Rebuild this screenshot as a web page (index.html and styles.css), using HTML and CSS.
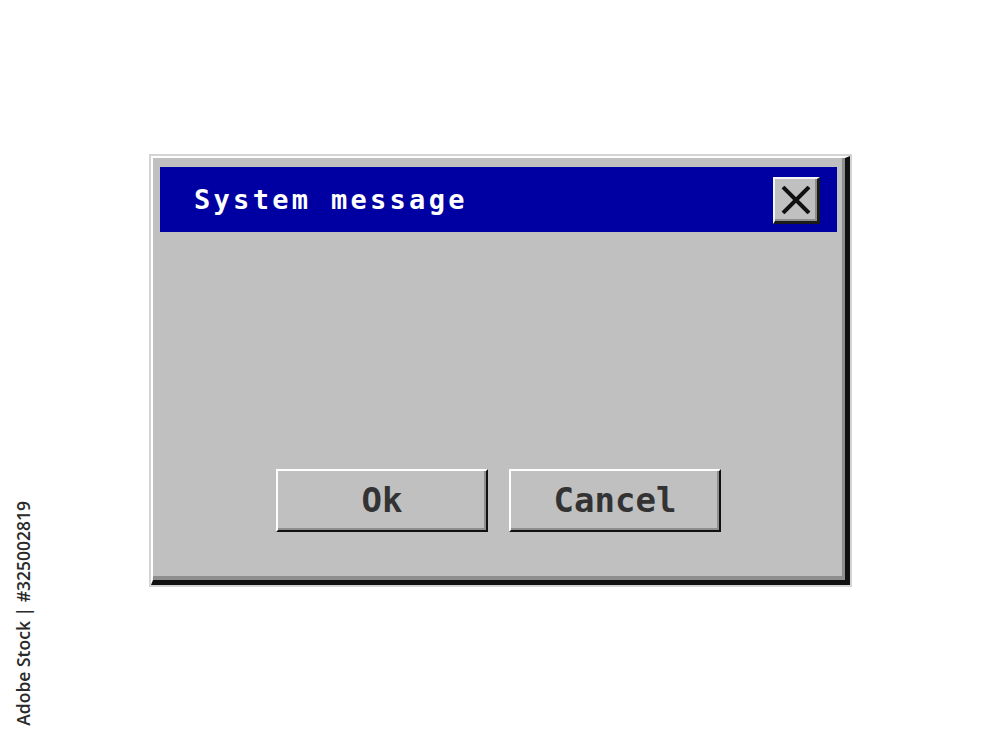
FILE: index.html
```html
<!DOCTYPE html>
<html lang="en">
  <head>
    <meta charset="UTF-8">
    <meta name="viewport" content="width=device-width, initial-scale=1.0">
    <title>System message</title>
    <link rel="stylesheet" href="styles.css">
  </head>
  <body>
    <div class="dialog">
      <div class="window">
        <div class="titlebar">
          <span class="title">System message</span>
          <button class="close" aria-label="Close">
            <svg width="30" height="28" viewBox="0 0 30 28">
              <path d="M2 1 L28 27 M28 1 L2 27" stroke="#111" stroke-width="4" fill="none"/>
            </svg>
          </button>
        </div>
        <div class="actions">
          <button class="btn">Ok</button>
          <button class="btn">Cancel</button>
        </div>
      </div>
    </div>
    <div class="stamp">Adobe Stock | #325002819</div>
  </body>
</html>
```
FILE: styles.css
```css
html {
  font-family: "DejaVu Sans Mono", monospace;
}

body {
  margin: 0;
  width: 1000px;
  height: 741px;
  background-color: #fff;
  position: relative;
  overflow: hidden;
}

.dialog {
  margin: 154px 0 0 149px;
  width: 703px;
  height: 433px;
  box-sizing: border-box;
  border: 2px solid #d4d4d4;
}

.window {
  box-sizing: border-box;
  height: 100%;
  background-color: #c0c0c0;
  border-top: 2px solid #fff;
  border-left: 2px solid #fff;
  border-right: 5px solid #111;
  border-bottom: 5px solid #111;
  box-shadow: inset -3px -4px 0 #8e8e8e;
  padding: 9px 8px 0 7px;
}

.titlebar {
  height: 65px;
  background-color: #0000a2;
  display: flex;
  align-items: center;
  justify-content: space-between;
  padding: 0 17px 0 34px;
}

.title {
  color: #fff;
  font-size: 27px;
  font-weight: bold;
  letter-spacing: 3.3px;
  margin-top: -1px;
}

.close {
  width: 47px;
  height: 47px;
  padding: 0;
  margin-top: 2px;
  box-sizing: border-box;
  background-color: #c0c0c0;
  border-top: 2px solid #f4f4f4;
  border-left: 2px solid #f4f4f4;
  border-right: 3px solid #1a1a1a;
  border-bottom: 3px solid #1a1a1a;
  box-shadow: inset -2px -2px 0 #8e8e8e;
  display: flex;
  align-items: center;
  justify-content: center;
}

.actions {
  display: flex;
  justify-content: center;
  gap: 21px;
  margin-top: 237px;
}

.btn {
  width: 212px;
  height: 63px;
  box-sizing: border-box;
  background-color: #c0c0c0;
  border-top: 2px solid #fff;
  border-left: 2px solid #fff;
  border-right: 2px solid #111;
  border-bottom: 2px solid #111;
  box-shadow: inset -2px -2px 0 #8e8e8e;
  font-family: "DejaVu Sans Mono", monospace;
  font-size: 34px;
  font-weight: bold;
  color: #333;
  padding: 0 0 2px 0;
}

.stamp {
  position: absolute;
  left: 11px;
  bottom: 15px;
  writing-mode: vertical-rl;
  transform: rotate(180deg);
  font-family: "Open Sans", sans-serif;
  font-size: 17.5px;
  font-weight: 600;
  color: #2a2a2a;
}
```
